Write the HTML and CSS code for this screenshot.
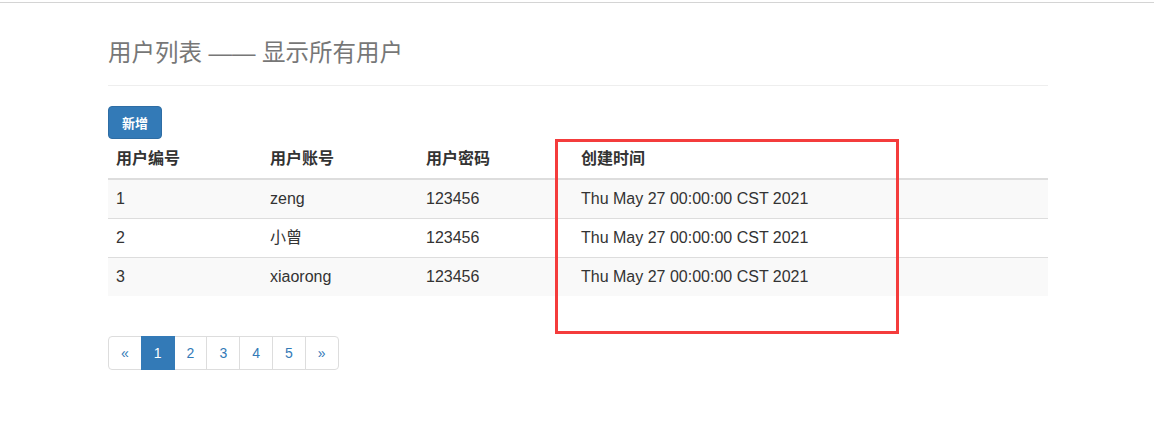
FILE: index.html
```html
<!DOCTYPE html>
<html lang="zh-CN">
<head>
<meta charset="utf-8">
<title>用户列表</title>
<link rel="stylesheet" href="styles.css">
</head>
<body>
<div class="topline"></div>
<div class="container">
  <div class="page-header">
    <h1>用户列表 —— 显示所有用户</h1>
  </div>
  <button class="btn">新增</button>
  <div class="table-wrap">
    <div class="table">
      <div class="tr thead">
        <div class="th">用户编号</div>
        <div class="th">用户账号</div>
        <div class="th">用户密码</div>
        <div class="th">创建时间</div>
      </div>
      <div class="tr odd first">
        <div class="td">1</div>
        <div class="td">zeng</div>
        <div class="td">123456</div>
        <div class="td">Thu May 27 00:00:00 CST 2021</div>
      </div>
      <div class="tr">
        <div class="td">2</div>
        <div class="td">小曾</div>
        <div class="td">123456</div>
        <div class="td">Thu May 27 00:00:00 CST 2021</div>
      </div>
      <div class="tr odd">
        <div class="td">3</div>
        <div class="td">xiaorong</div>
        <div class="td">123456</div>
        <div class="td">Thu May 27 00:00:00 CST 2021</div>
      </div>
    </div>
    <div class="highlight"></div>
  </div>
  <ul class="pagination">
    <li><a>&laquo;</a></li>
    <li class="active"><a>1</a></li>
    <li><a>2</a></li>
    <li><a>3</a></li>
    <li><a>4</a></li>
    <li><a>5</a></li>
    <li><a>&raquo;</a></li>
  </ul>
</div>
</body>
</html>
```

FILE: styles.css
```css
html, body {
  margin: 0;
  padding: 0;
  background: #fff;
}
body {
  font-family: "Liberation Sans", "Noto Sans CJK SC", sans-serif;
  font-size: 16px;
  color: #333;
}
.topline {
  margin-top: 2px;
  height: 1px;
  background: #d4d4d4;
}
.container {
  width: 940px;
  margin: 0 0 0 calc(50% - 469px);
}
.page-header {
  padding-top: 37px;
  padding-bottom: 19px;
  border-bottom: 1px solid #eee;
}
.page-header h1 {
  margin: 0;
  font-size: 23.5px;
  line-height: 26px;
  font-weight: normal;
  color: #777;
}
.btn {
  display: block;
  margin-top: 20px;
  width: 54px;
  height: 33px;
  padding: 0;
  border: 1px solid #2e6da4;
  border-radius: 4px;
  background: #337ab7;
  color: #fff;
  font-family: "Liberation Sans", "Noto Sans CJK SC", sans-serif;
  font-size: 13px;
  font-weight: bold;
}
.table-wrap {
  position: relative;
  margin-top: 1px;
}
.table {
  display: grid;
  grid-template-columns: 154px 156px 155px 1fr;
}
.tr {
  display: contents;
}
.th, .td {
  padding: 8px;
  line-height: 22px;
}
.th {
  font-weight: bold;
  border-bottom: 2px solid #ddd;
}
.td {
  border-top: 1px solid #ddd;
}
.first .td {
  border-top: 0;
}
.odd .td {
  background: #f9f9f9;
}
.highlight {
  position: absolute;
  left: 447px;
  top: -1px;
  width: 338px;
  height: 189px;
  border: 3px solid #f43c3c;
  pointer-events: none;
}
.pagination {
  display: flex;
  list-style: none;
  margin: 40px 0 0;
  padding: 0;
  font-size: 14px;
}
.pagination li a {
  display: block;
  padding: 6px 12px;
  line-height: 20px;
  color: #337ab7;
  border: 1px solid #ddd;
  margin-left: -1px;
  background: #fff;
}
.pagination li:first-child a {
  margin-left: 0;
  border-radius: 4px 0 0 4px;
}
.pagination li:last-child a {
  border-radius: 0 4px 4px 0;
}
.pagination li.active a {
  background: #337ab7;
  border-color: #337ab7;
  color: #fff;
  position: relative;
  z-index: 1;
}
```
